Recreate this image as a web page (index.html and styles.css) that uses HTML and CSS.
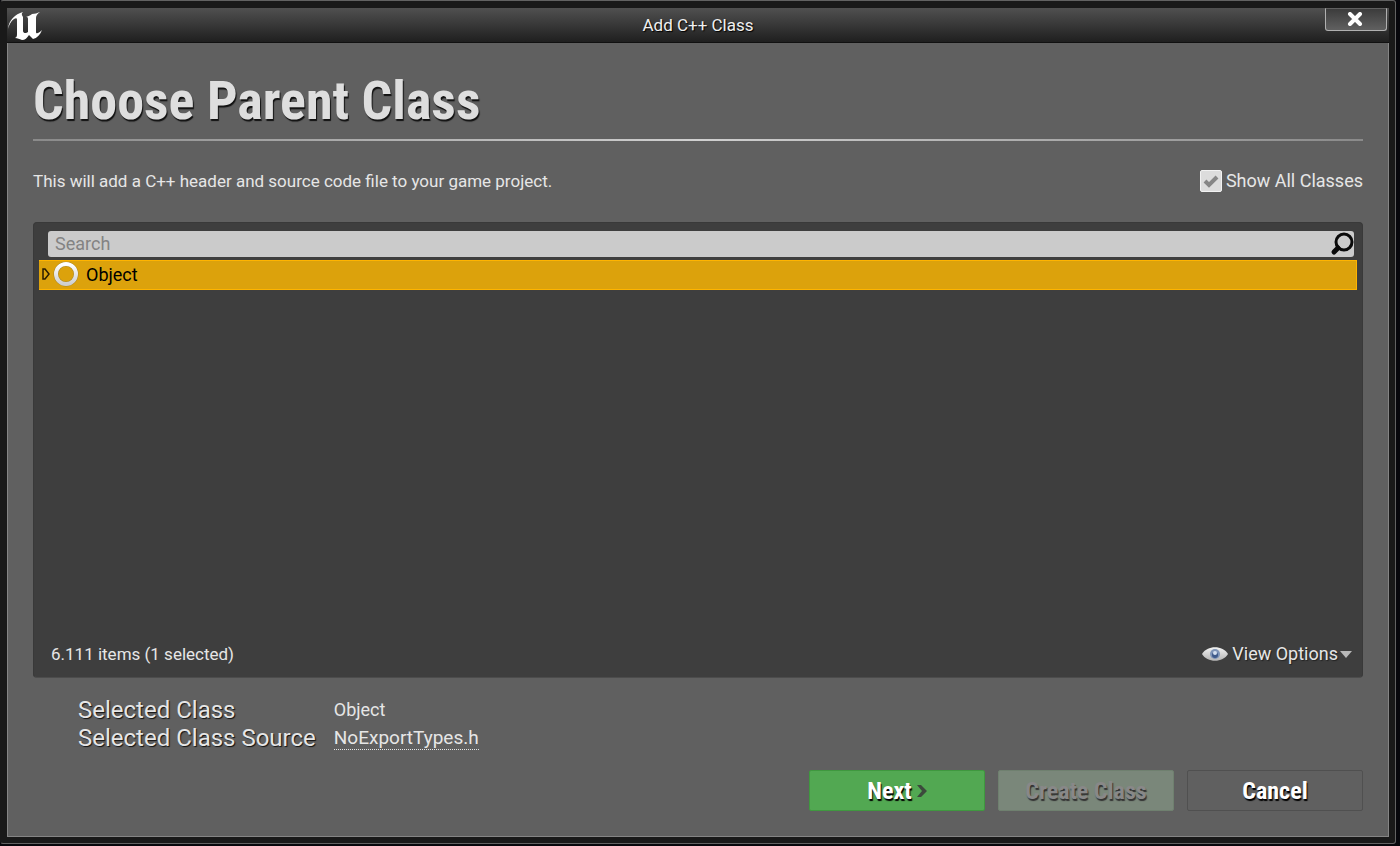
FILE: index.html
```
<!DOCTYPE html>
<html lang="en">
<head>
<meta charset="utf-8">
<title>Add C++ Class</title>
<link rel="stylesheet" href="styles.css">
</head>

<body>
<div class="window">
  <header class="titlebar">
    <svg class="logo" viewBox="0 0 34 28" width="34" height="28" aria-hidden="true">
      <path fill="#fff" d="M0 17 C1 8 7 2 15 0 C13 2 14 3 15 5 V19 C15 21 18 22 20 20 V7 C20 5 19 5 18 5 C21 4 23 3 24 2 C27 2 29 1 32 0 C29 2 28 4 28 6 V20 C28 22 30 22 34 18 C32 23 29 26 25 27 L21 23 C19 26 17 28 14 28 C11 27 10 26 7 26 C9 25 9 24 9 21 V8 C9 6 8 6 6 7 C3 9 1 13 0 17 Z"/>
    </svg>
    <span class="caption">Add C++ Class</span>
    <button class="close" type="button" aria-label="Close">
      <svg viewBox="0 0 16 14" width="16" height="14" aria-hidden="true">
        <path d="M3 2 L13 12 M13 2 L3 12" stroke="#fff" stroke-width="4" stroke-linecap="round"/>
      </svg>
    </button>
  </header>

  <main class="content">
    <h1 class="heading">Choose Parent Class</h1>

    <div class="intro">
      <span class="note">This will add a C++ header and source code file to your game project.</span>
      <label class="showAll" for="showAll">
        <input id="showAll" class="check" type="checkbox" checked>
        Show All Classes
      </label>
    </div>

    <section class="picker">
      <div class="search">
        <input class="searchBox" type="text" placeholder="Search" aria-label="Search">
        <svg viewBox="0 0 24 24" width="24" height="24" aria-hidden="true">
          <circle cx="14" cy="10" r="8" fill="none" stroke="#0a0a0a" stroke-width="3"/>
          <path d="M8 16 L4 20" stroke="#0a0a0a" stroke-width="5" stroke-linecap="round"/>
        </svg>
      </div>

      <div class="tree" role="tree" aria-label="Classes">
        <div class="treeItem" role="treeitem" aria-selected="true" aria-expanded="false" tabindex="0">
          <svg viewBox="0 0 10 14" width="10" height="14" aria-hidden="true">
            <path d="M2 1 H4 L8 6 L4 11 H2 Z" fill="none" stroke="#2a1d00" stroke-width="1.5"/>
          </svg>
          <svg class="classIcon" viewBox="0 0 26 26" width="26" height="26" aria-hidden="true">
            <defs>
              <linearGradient id="ring" x1="0" y1="0" x2="0" y2="1">
                <stop offset="0" stop-color="#fff"/>
                <stop offset="1" stop-color="#cfcfcf"/>
              </linearGradient>
            </defs>
            <circle cx="13" cy="12" r="10" fill="none" stroke="#a9851f" stroke-width="5"/>
            <circle cx="13" cy="12" r="10" fill="none" stroke="url(#ring)" stroke-width="4"/>
          </svg>
          <span>Object</span>
        </div>
      </div>

      <div class="status">
        <span class="note">6.111 items (1 selected)</span>
        <button class="viewOptions" type="button">
          <svg viewBox="0 0 26 16" width="26" height="16" aria-hidden="true">
            <defs>
              <linearGradient id="eye" x1="0" y1="0" x2="0" y2="1">
                <stop offset="0" stop-color="#f2f2f2"/>
                <stop offset="1" stop-color="#b4b4b4"/>
              </linearGradient>
            </defs>
            <path d="M0 8 C5 -1 21 -1 26 8 C21 17 5 17 0 8 Z" fill="url(#eye)"/>
            <circle cx="13" cy="8" r="5" fill="#7f95b8"/>
            <circle cx="13" cy="9" r="3" fill="#3f5a8a"/>
            <circle cx="13" cy="7" r="2" fill="#d5e0f0"/>
          </svg>
          <span>View Options</span>
          <svg class="arrow" viewBox="0 0 12 7" width="12" height="7" aria-hidden="true">
            <path d="M0 0 H12 L6 7 Z" fill="#b8b8b8"/>
          </svg>
        </button>
      </div>
    </section>

    <dl class="details">
      <dt>Selected Class</dt>
      <dd>Object</dd>
      <dt>Selected Class Source</dt>
      <dd><a class="source" href="#">NoExportTypes.h</a></dd>
    </dl>

    <div class="buttons">
      <button class="button next" type="button">
        Next
        <svg viewBox="0 0 10 14" width="10" height="14" aria-hidden="true">
          <path d="M0 1 H4 L10 7 L4 13 H0 L5 7 Z" fill="#3c4a3c"/>
        </svg>
      </button>
      <button class="button create" type="button" disabled>Create Class</button>
      <button class="button" type="button">Cancel</button>
    </div>
  </main>
</div>
</body>
</html>
```
FILE: styles.css
```
* {
  box-sizing: border-box;
}

body {
  margin: 0;
  height: 100vh;
  padding: 0 4px 2px 0;
  background: #07070c;
  color: #e6e6e6;
  font: 18px/24px Roboto, sans-serif;
}

button, input {
  font: inherit;
  color: inherit;
}

.window {
  display: flex;
  flex-direction: column;
  min-height: 100%;
  padding: 7px 6px 6px;
  background: #191919;
  border: 1px solid #626262;
  border-left-color: #191919;
  border-radius: 3px;
}

.titlebar {
  position: relative;
  display: flex;
  align-items: center;
  justify-content: center;
  height: 35px;
  background: linear-gradient(#505050, #1f1f1f);
  border-bottom: 1px solid #111;
}

.logo {
  position: absolute;
  left: 1px;
  top: 4px;
}

.caption {
  color: #f0f0f0;
  font-size: 17px;
  text-shadow: 1px 1px 1px #000;
}

.close {
  position: absolute;
  right: 2px;
  top: 0;
  display: flex;
  align-items: center;
  justify-content: center;
  width: 62px;
  height: 23px;
  padding: 0 3px 2px 0;
  background: linear-gradient(#3c3c3c, #606060);
  border: 1px solid #b0b0b0;
  border-top-color: #606060;
  border-radius: 0 0 3px 3px;
}

.content {
  flex: 1;
  display: flex;
  flex-direction: column;
  padding: 26px 25px 25px;
  background: #606060;
  border: 1px solid #858585;
  border-top: 0;
}

.heading {
  margin: 0;
  padding-bottom: 6px;
  border-bottom: 2px solid;
  border-image: linear-gradient(to right, #8a8a8a, #d0d0d0 50%, #8a8a8a) 1;
  color: #dedede;
  font: bold 54px/64px "Roboto Condensed", Roboto, sans-serif;
  text-shadow: 1px 2px 1px #111;
}

.intro {
  display: flex;
  justify-content: space-between;
  align-items: center;
  padding: 28px 0 29px;
}

.note {
  font-size: 17px;
}

.showAll {
  display: flex;
  align-items: center;
  gap: 4px;
}

.check {
  appearance: none;
  width: 22px;
  height: 22px;
  margin: 0;
  background: #dcdcdc url("data:image/svg+xml,%3Csvg xmlns='http://www.w3.org/2000/svg' viewBox='0 0 20 20'%3E%3Cpath d='M4 10 L8 14 L16 6' fill='none' stroke='%23868686' stroke-width='4'/%3E%3C/svg%3E");
  border: 1px solid #f2f2f2;
  border-radius: 2px;
}

.check:not(:checked) {
  background-image: none;
}

.picker {
  flex: 1;
  display: flex;
  flex-direction: column;
  padding: 8px 5px 11px;
  background: #3e3e3e;
  border: 1px solid #393939;
  border-bottom-color: #4c4c4c;
  border-radius: 4px;
}

.search {
  display: flex;
  align-items: center;
  height: 26px;
  margin: 0 3px 3px 9px;
  background: #cbcbcb;
  border-radius: 3px;
}

.searchBox {
  flex: 1;
  min-width: 0;
  padding: 0 7px;
  color: #222;
  background: none;
  border: 0;
  outline: 0;
}

.searchBox::placeholder {
  color: #838383;
}

.tree {
  flex: 1;
}

.treeItem {
  display: flex;
  align-items: center;
  height: 30px;
  padding-left: 2px;
  color: #000;
  background: #dca20c;
  border: 1px solid #ffb400;
  border-left: 0;
}

.classIcon {
  margin: 0 7px 0 2px;
}

.status {
  display: flex;
  justify-content: space-between;
  align-items: center;
  padding: 0 5px 0 12px;
}

.viewOptions {
  display: flex;
  align-items: center;
  padding: 0;
  background: none;
  border: 0;
  text-shadow: 1px 1px 1px #222;
}

.viewOptions span {
  margin: 0 2px 0 4px;
}

.details {
  display: grid;
  grid-template-columns: auto 1fr;
  grid-auto-rows: 28px;
  align-items: center;
  column-gap: 18px;
  margin: 18px 0 18px 45px;
}

.details dt {
  font-size: 24px;
  text-shadow: 1px 1px 1px #111;
}

.details dd {
  margin: 0;
}

.source {
  display: inline-block;
  color: inherit;
  font-size: 19px;
  line-height: 22px;
  text-decoration: none;
  border-bottom: 1px dotted #e6e6e6;
}

.buttons {
  display: flex;
  justify-content: flex-end;
  gap: 13px;
}

.button {
  display: flex;
  align-items: center;
  justify-content: center;
  gap: 5px;
  width: 176px;
  height: 41px;
  color: #fff;
  background: #606060;
  border: 1px solid #505050;
  border-radius: 2px;
  font: bold 24px/26px "Roboto Condensed", Roboto, sans-serif;
  text-shadow: 1px 2px 1px #000;
}

.next {
  background: #52a852;
  border-color: #3f983f;
}

.create {
  color: #888;
  background: #7a877a;
  border-color: #6f806f;
  text-shadow: 1px 2px 1px #333;
}
```
